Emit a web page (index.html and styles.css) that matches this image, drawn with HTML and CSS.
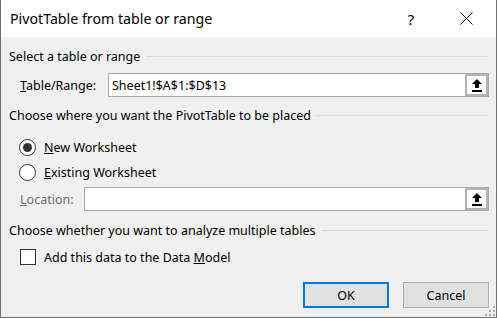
FILE: index.html
```html
<!DOCTYPE html>
<html lang="en">
<head>
    <meta charset="UTF-8">
    <title>PivotTable from table or range</title>
    <link rel="stylesheet" href="styles.css">
</head>
<body>
    <div class="dialog">
        <div class="titlebar">
            <span class="title">PivotTable from table or range</span>
            <span class="help">?</span>
            <span class="close">
                <svg width="13" height="13" viewBox="0 0 13 13"><path d="M0.5 0.5 L12.5 12.5 M12.5 0.5 L0.5 12.5" stroke="#000" stroke-width="1" fill="none"/></svg>
            </span>
        </div>

        <div class="content">
            <div class="group-head">
                <span>Select a table or range</span>
                <span class="rule"></span>
            </div>
            <div class="field-row range-row">
                <label class="label range-label"><u>T</u>able/Range:</label>
                <div class="input">
                    <span class="value">Sheet1!$A$1:$D$13</span>
                    <span class="collapse">
                        <svg width="12" height="14" viewBox="0 0 12 14"><path d="M6 1 L11 6 L8 6 L8 10 L4 10 L4 6 L1 6 Z" fill="#000"/><rect x="1" y="12" width="10" height="2" fill="#000"/></svg>
                    </span>
                </div>
            </div>

            <div class="group-head second">
                <span>Choose where you want the PivotTable to be placed</span>
                <span class="rule"></span>
            </div>
            <div class="option first-option">
                <span class="radio checked"></span>
                <span><u>N</u>ew Worksheet</span>
            </div>
            <div class="option">
                <span class="radio"></span>
                <span><u>E</u>xisting Worksheet</span>
            </div>
            <div class="field-row location-row">
                <label class="label disabled"><u>L</u>ocation:</label>
                <div class="input">
                    <span class="value"></span>
                    <span class="collapse">
                        <svg width="12" height="14" viewBox="0 0 12 14"><path d="M6 1 L11 6 L8 6 L8 10 L4 10 L4 6 L1 6 Z" fill="#000"/><rect x="1" y="12" width="10" height="2" fill="#000"/></svg>
                    </span>
                </div>
            </div>

            <div class="group-head third">
                <span>Choose whether you want to analyze multiple tables</span>
                <span class="rule"></span>
            </div>
            <div class="option check-option">
                <span class="checkbox"></span>
                <span>Add this data to the Data <u>M</u>odel</span>
            </div>

            <div class="buttons">
                <button class="btn default">OK</button>
                <button class="btn">Cancel</button>
            </div>
            <span class="grip"></span>
        </div>
    </div>
</body>
</html>
```

FILE: styles.css
```css
body {
    margin: 0;
    font-family: 'Noto Sans', 'Open Sans', sans-serif;
    font-size: 12.5px;
    color: #000;
    background: #f0f0f0;
}

.dialog {
    width: 497px;
    height: 318px;
    box-sizing: border-box;
    border: 1px solid #6f6f6f;
    border-top: none;
    display: flex;
    flex-direction: column;
    background: #f0f0f0;
}

.titlebar {
    height: 37px;
    background: #fff;
    display: flex;
    align-items: center;
    padding-left: 9px;
}

.title {
    font-size: 14.2px;
    flex: 1;
}

.help {
    font-size: 15px;
    width: 20px;
    margin-right: 39px;
    text-align: center;
}

.close {
    display: flex;
    margin-right: 23px;
}

.content {
    position: relative;
    flex: 1;
    padding: 12px 7px 0 8px;
}

.group-head {
    display: flex;
    align-items: center;
    height: 16px;
    line-height: 16px;
}

.group-head .rule {
    flex: 1;
    height: 1px;
    background: #dcdcdc;
    margin-left: 6px;
    margin-top: -2px;
}

.group-head.second {
    margin-top: 11px;
}

.group-head.third {
    margin-top: 12px;
}

.field-row {
    display: flex;
    align-items: center;
}

.range-row {
    margin-top: 8px;
}

.label {
    padding-left: 11px;
}

.range-label {
    width: 88px;
}

.disabled {
    color: #6d6d6d;
    width: 64px;
}

.input {
    flex: 1;
    height: 24px;
    box-sizing: border-box;
    border: 1px solid #a9a9a9;
    background: #fff;
    display: flex;
    align-items: center;
}

.value {
    flex: 1;
    padding-left: 3px;
}

.collapse {
    width: 23px;
    height: 22px;
    box-sizing: border-box;
    border: 2px solid #b4b4b4;
    background: #fff;
    display: flex;
    align-items: center;
    justify-content: center;
}

.option {
    display: flex;
    align-items: center;
    height: 16px;
    margin-top: 9px;
    padding-left: 10px;
}

.first-option {
    margin-top: 15px;
}

.location-row {
    margin-top: 7px;
}

.check-option {
    margin-top: 10px;
}

.radio {
    width: 17px;
    height: 17px;
    box-sizing: border-box;
    border: 1px solid #333;
    border-radius: 50%;
    background: #fff;
    margin-right: 8px;
    display: flex;
    align-items: center;
    justify-content: center;
}

.radio.checked::after {
    content: '';
    width: 9px;
    height: 9px;
    border-radius: 50%;
    background: #333;
}

.checkbox {
    width: 16px;
    height: 16px;
    box-sizing: border-box;
    border: 1px solid #333;
    background: #fff;
    margin-left: 1px;
    margin-right: 8px;
}

.buttons {
    display: flex;
    justify-content: flex-end;
    gap: 14px;
    margin-top: 17px;
}

.btn {
    width: 86px;
    height: 26px;
    box-sizing: border-box;
    border: 1px solid #adadad;
    background: #e1e1e1;
    font-family: inherit;
    font-size: 12.5px;
    color: #000;
    padding: 0;
}

.btn.default {
    border: 2px solid #0078d7;
}

.grip {
    position: absolute;
    right: 1px;
    bottom: 1px;
    width: 10px;
    height: 10px;
    background:
        linear-gradient(#a8a8a8, #a8a8a8) 8px 0 / 2px 2px no-repeat,
        linear-gradient(#a8a8a8, #a8a8a8) 4px 4px / 2px 2px no-repeat,
        linear-gradient(#a8a8a8, #a8a8a8) 8px 4px / 2px 2px no-repeat,
        linear-gradient(#a8a8a8, #a8a8a8) 0 8px / 2px 2px no-repeat,
        linear-gradient(#a8a8a8, #a8a8a8) 4px 8px / 2px 2px no-repeat,
        linear-gradient(#a8a8a8, #a8a8a8) 8px 8px / 2px 2px no-repeat;
}
```
